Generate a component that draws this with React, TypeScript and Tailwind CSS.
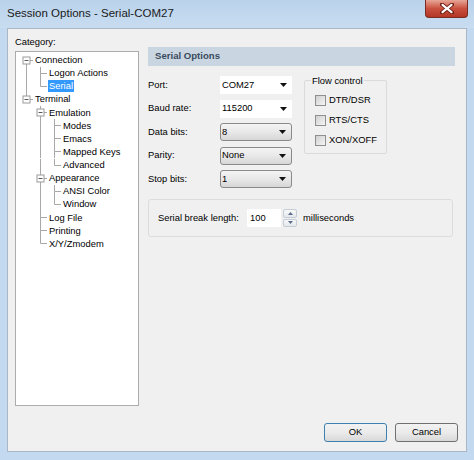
import React from "react";

type TNode = { label: string; children?: TNode[]; selected?: boolean };

const tree: TNode[] = [
  {
    label: "Connection",
    children: [{ label: "Logon Actions" }, { label: "Serial", selected: true }],
  },
  {
    label: "Terminal",
    children: [
      {
        label: "Emulation",
        children: [{ label: "Modes" }, { label: "Emacs" }, { label: "Mapped Keys" }, { label: "Advanced" }],
      },
      { label: "Appearance", children: [{ label: "ANSI Color" }, { label: "Window" }] },
      { label: "Log File" },
      { label: "Printing" },
      { label: "X/Y/Zmodem" },
    ],
  },
];

type Row = {
  label: string;
  selected?: boolean;
  guides: boolean[];
  hasPrev: boolean;
  hasNext: boolean;
  hasChildren: boolean;
};

function flatten(nodes: TNode[], guides: boolean[], isRoot: boolean, out: Row[]) {
  nodes.forEach((n, i) => {
    const hasNext = i < nodes.length - 1;
    out.push({
      label: n.label,
      selected: n.selected,
      guides,
      hasPrev: !isRoot || i > 0,
      hasNext,
      hasChildren: !!n.children,
    });
    if (n.children) flatten(n.children, [...guides, hasNext], false, out);
  });
  return out;
}

const rows = flatten(tree, [], true, []);
const LINE = "#a8a8a8";
const RH = 13.14;

function GuideCell({ on }: { on: boolean }) {
  return (
    <svg width="14" height={RH} className="shrink-0 block">
      {on && <line x1="7.5" y1="0" x2="7.5" y2={RH} stroke={LINE} strokeWidth="1" />}
    </svg>
  );
}

function ConnCell({ r }: { r: Row }) {
  const mid = 6.5;
  return (
    <svg width="14" height={RH} className="shrink-0 block">
      {r.hasPrev && <line x1="7.5" y1="0" x2="7.5" y2={mid} stroke={LINE} />}
      {r.hasNext && <line x1="7.5" y1={mid} x2="7.5" y2={RH} stroke={LINE} />}
      <line x1="7.5" y1={mid} x2="14" y2={mid} stroke={LINE} />
      {r.hasChildren && (
        <g>
          <rect x="4" y="3" width="7" height="7" fill="#fff" stroke="#9a9a9a" />
          <line x1="5.5" y1="6.5" x2="9.5" y2="6.5" stroke="#5a5a5a" />
        </g>
      )}
    </svg>
  );
}

function Tree() {
  return (
    <div className="w-[124px] h-[355px] bg-white border border-[#acacac] pt-[1.5px] pl-[2.5px]">
      {rows.map((r, i) => (
        <div key={i} className="flex items-center" style={{ height: RH }}>
          {r.guides.map((g, j) => (
            <GuideCell key={j} on={g} />
          ))}
          <ConnCell r={r} />
          <span
            className={`ml-[1px] px-[1.5px] leading-[12px] whitespace-nowrap ${
              r.selected ? "bg-[#3399ff] text-white" : "text-[#000]"
            }`}
          >
            {r.label}
          </span>
        </div>
      ))}
    </div>
  );
}

function Arrow() {
  return (
    <svg width="7" height="4" className="block">
      <path d="M0 0H7L3.5 4Z" fill="#111" />
    </svg>
  );
}

function Combo({ value, flat }: { value: string; flat?: boolean }) {
  return (
    <div
      className={`w-[72px] h-[18px] flex items-center justify-between pr-[5px] ${
        flat
          ? "bg-white pl-[2px]"
          : "border border-[#8a8a8a] rounded-[3px] bg-linear-to-b from-[#f4f4f4] via-[#e8e8e8] to-[#d6d6d6] pl-[1px]"
      }`}
    >
      <span>{value}</span>
      <Arrow />
    </div>
  );
}

function Check({ label }: { label: string }) {
  return (
    <div className="flex items-center h-[11px]">
      <div className="w-[11px] h-[11px] border border-[#8e8f8f] bg-linear-to-br from-[#cfcfcf] to-[#f6f6f6]" />
      <span className="ml-[3px]">{label}</span>
    </div>
  );
}

function Button({ label, def }: { label: string; def?: boolean }) {
  return (
    <div
      className={`w-[63px] h-[19px] rounded-[3px] flex items-center justify-center border ${
        def ? "border-[#3c7fb1]" : "border-[#707070]"
      } bg-linear-to-b from-[#f2f2f2] via-[#ebebeb] to-[#d8d8d8]`}
    >
      <span className="text-black">{label}</span>
    </div>
  );
}

export default function App() {
  const fields: [string, string, boolean][] = [
    ["Port:", "COM27", true],
    ["Baud rate:", "115200", true],
    ["Data bits:", "8", false],
    ["Parity:", "None", false],
    ["Stop bits:", "1", false],
  ];
  return (
    <div className="w-[474px] h-[460px] bg-[#c2d9ef] flex flex-col font-['Liberation_Sans',Arial,sans-serif] text-[9.4px] text-black overflow-hidden">
      {/* title bar */}
      <div className="h-[28px] shrink-0 flex items-start bg-linear-to-b from-[#b9d2eb] to-[#c9ddf1]">
        <div className="pl-[7px] pt-[6px] text-[11.5px] text-[#1a1a1a] leading-[14px]">
          Session Options - Serial-COM27
        </div>
        <div className="ml-auto mr-[6px] w-[43px] h-[18px] rounded-b-[4px] border border-t-0 border-[#7c2b22] bg-linear-to-b from-[#e6a596] via-[#c9503f] to-[#b43625] flex items-center justify-center">
          <svg width="14" height="11" viewBox="0 0 14 11">
            <path
              d="M2 1.5L7 5.5L12 1.5M2 9.5L7 5.5L12 9.5"
              stroke="#6b1c14"
              strokeWidth="4"
              fill="none"
              strokeLinecap="round"
            />
            <path
              d="M2.5 1.8L7 5.5L11.5 1.8M2.5 9.2L7 5.5L11.5 9.2"
              stroke="#fff"
              strokeWidth="2.2"
              fill="none"
              strokeLinecap="round"
            />
          </svg>
        </div>
      </div>
      {/* client */}
      <div className="mx-[7px] w-[460px] h-[424px] shrink-0 bg-[#f0f0f0] border border-[#a9b7c6] flex flex-col">
        <div className="flex flex-1 pl-[7px] pt-[5px]">
          <div className="flex flex-col">
            <div className="h-[17px] flex items-center">Category:</div>
            <Tree />
          </div>
          <div className="ml-[9px] w-[307px] pt-[13px] flex flex-col">
            <div className="h-[19px] bg-[#c9d5e1] flex items-center pl-[7px] font-bold text-[9.6px] text-[#3a4b5d]">
              Serial Options
            </div>
            <div className="flex mt-[10px]">
              <div className="flex flex-col gap-[5.5px]">
                {fields.map(([l, v, f]) => (
                  <div key={l} className="flex items-center h-[18px]">
                    <span className="w-[72px]">{l}</span>
                    <Combo value={v} flat={f} />
                  </div>
                ))}
              </div>
              <fieldset className="ml-[12px] w-[83px] h-[79px] border border-[#dadada] rounded-[2px] -mt-[1px] p-0">
                <legend className="ml-[6px] px-[1px] leading-[11px]">Flow control</legend>
                <div className="flex flex-col gap-[9px] pl-[10px] pt-[9px]">
                  <Check label="DTR/DSR" />
                  <Check label="RTS/CTS" />
                  <Check label="XON/XOFF" />
                </div>
              </fieldset>
            </div>
            <div className="mt-[11px] w-[305px] h-[38px] border border-[#dcdcdc] rounded-[3px] flex items-center pl-[9px]">
              <span className="w-[89px]">Serial break length:</span>
              <div className="w-[34px] h-[18px] bg-white flex items-center pl-[3px]">100</div>
              <div className="ml-[2px] w-[14px] h-[18px] flex flex-col gap-[1px]">
                <div className="flex-1 border border-[#c4ccd6] rounded-[2px] bg-linear-to-b from-[#f8f8f8] to-[#e4e8ec] flex items-center justify-center">
                  <svg width="5" height="3" className="block">
                    <path d="M0 3H5L2.5 0Z" fill="#5b6e88" />
                  </svg>
                </div>
                <div className="flex-1 border border-[#c4ccd6] rounded-[2px] bg-linear-to-b from-[#f8f8f8] to-[#e4e8ec] flex items-center justify-center">
                  <svg width="5" height="3" className="block">
                    <path d="M0 0H5L2.5 3Z" fill="#5b6e88" />
                  </svg>
                </div>
              </div>
              <span className="ml-[6px]">milliseconds</span>
            </div>
          </div>
        </div>
        <div className="flex justify-end gap-[8px] pr-[8px] pb-[9px]">
          <Button label="OK" def />
          <Button label="Cancel" />
        </div>
      </div>
    </div>
  );
}
